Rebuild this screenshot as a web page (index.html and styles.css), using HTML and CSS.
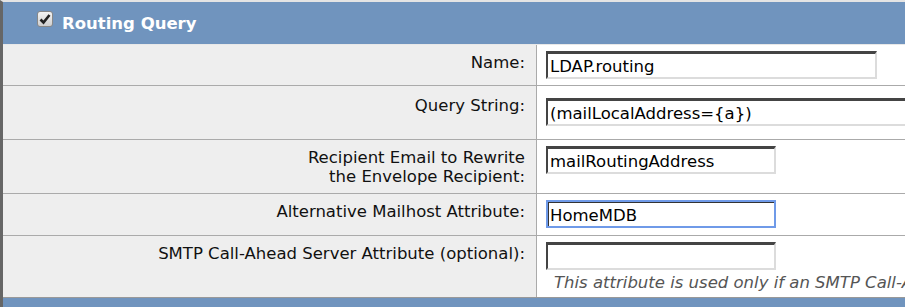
FILE: index.html
```html
<!DOCTYPE html>
<html>
<head>
<meta charset="utf-8">
<link rel="stylesheet" href="styles.css">
</head>
<body>
<div class="page">
  <div class="header">
    <span class="check"><svg width="12" height="12" viewBox="0 0 12 12"><path d="M1.5 6.5 L4.5 9.5 L10.5 2" fill="none" stroke="#222" stroke-width="2.6"/></svg></span>
    <span class="title">Routing Query</span>
  </div>
  <div class="row">
    <div class="label">Name:</div>
    <div class="field field-first"><input class="inp w-name" type="text" value="LDAP.routing"></div>
  </div>
  <div class="row">
    <div class="label lab-query">Query String:</div>
    <div class="field field-query"><input class="inp w-query" type="text" value="(mailLocalAddress={a})"></div>
  </div>
  <div class="row">
    <div class="label">Recipient Email to Rewrite<br>the Envelope Recipient:</div>
    <div class="field"><input class="inp w-short" type="text" value="mailRoutingAddress"></div>
  </div>
  <div class="row">
    <div class="label">Alternative Mailhost Attribute:</div>
    <div class="field"><input class="inp w-short focus" type="text" value="HomeMDB"></div>
  </div>
  <div class="row last">
    <div class="label">SMTP Call-Ahead Server Attribute (optional):</div>
    <div class="field field-smtp"><input class="inp w-short" type="text" value="">
      <div class="hint">This attribute is used only if an SMTP Call-Ahead Server Profile is selected.</div>
    </div>
  </div>
  <div class="footer"></div>
</div>
</body>
</html>
```
FILE: styles.css
```css
html, body {
  margin: 0;
  padding: 0;
  background: #eeeeee;
  overflow: hidden;
}
body {
  font-family: "DejaVu Sans", Verdana, sans-serif;
  font-size: 16.5px;
  color: #111;
}
.page {
  width: 905px;
  height: 307px;
  border-left: 3px solid #666;
  border-top: 2px solid #e4e4e4;
  box-sizing: border-box;
  overflow: hidden;
}
.header {
  height: 43px;
  background: #7094be;
  border-bottom: 1px solid #e8e8e8;
  display: flex;
  align-items: flex-start;
  box-sizing: border-box;
}
.check {
  margin: 9px 0 0 34px;
  width: 14px;
  height: 14px;
  border: 1px solid #888;
  border-radius: 3px;
  background: linear-gradient(#f4f4f4, #cfcfcf);
  display: flex;
  align-items: center;
  justify-content: center;
}
.title {
  margin: 12px 0 0 9px;
  color: #fff;
  font-weight: bold;
  font-size: 16.5px;
  line-height: 19px;
}
.row {
  display: flex;
  border-bottom: 1px solid #aaaaaa;
}
.label {
  width: 534px;
  box-sizing: border-box;
  padding: 8px 11px 7px 10px;
  text-align: right;
  line-height: 19px;
  border-right: 1px solid #aaaaaa;
  background: #eeeeee;
}
.lab-query {
  padding-top: 10px;
}
.field {
  flex: 1;
  background: #ffffff;
  padding: 6px 0 7px 9px;
  overflow: hidden;
  white-space: nowrap;
}
.field-first {
  padding-bottom: 6px;
}
.field-query {
  padding-top: 12px;
  padding-bottom: 13px;
}
.field-smtp {
  padding-bottom: 5px;
}
.inp {
  display: block;
  box-sizing: border-box;
  height: 28px;
  margin: 0;
  padding: 2px 2px 0 2px;
  font-family: "DejaVu Sans", Verdana, sans-serif;
  font-size: 16.5px;
  color: #000;
  background: #fff;
  border-style: solid;
  border-width: 3px 2px 2px 2px;
  border-color: #444 #dcdcdc #dcdcdc #444;
  outline: none;
}
.w-name { width: 331px; }
.w-query { width: 420px; }
.w-short { width: 230px; }
.focus {
  border: 2px solid #6f9ae8;
  box-shadow: inset 1px 1px 0 #333;
}
.hint {
  font-style: italic;
  color: #555;
  padding: 4px 0 0 8px;
  line-height: 18px;
}
.footer {
  height: 20px;
  background: #7094be;
  border-top: 1px solid #999;
  margin-top: -1px;
}
```
